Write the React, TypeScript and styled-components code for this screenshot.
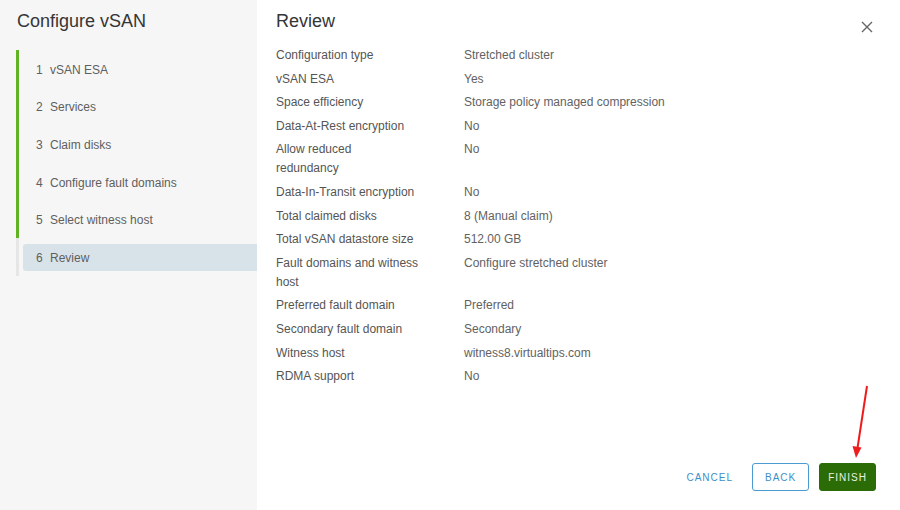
import styled, { createGlobalStyle } from 'styled-components';

const GlobalStyle = createGlobalStyle`
  html, body {
    margin: 0;
    padding: 0;
    background: #ffffff;
  }
  body {
    font-family: "Liberation Sans", Arial, sans-serif;
    color: #565656;
  }
  * {
    box-sizing: border-box;
  }
`;

const Shell = styled.div`
  position: relative;
  display: flex;
  width: 900px;
  height: 510px;
  overflow: hidden;
`;

const Sidebar = styled.aside`
  width: 257px;
  flex-shrink: 0;
  background: #f6f6f6;
  padding: 10px 0 0 16px;
`;

const SidebarTitle = styled.h2`
  margin: 0 0 17px 1px;
  font-size: 18px;
  line-height: 23px;
  font-weight: 400;
  color: #353535;
`;

const StepList = styled.ol`
  list-style: none;
  margin: 0;
  padding: 0;
`;

const Step = styled.li<{ $done?: boolean }>`
  height: 37.6px;
  padding: 6.5px 0 4.5px 4px;
  border-left: 3px solid ${({ $done }) => ($done ? '#62b323' : '#e6e6e6')};
`;

const StepInner = styled.div<{ $active?: boolean }>`
  display: flex;
  align-items: center;
  height: 100%;
  padding-left: 13px;
  border-radius: 3px 0 0 3px;
  background: ${({ $active }) => ($active ? '#d8e3e9' : 'transparent')};
  font-size: 12px;
  color: #5f5f5f;
`;

const StepNum = styled.span`
  width: 14px;
`;

const Main = styled.main`
  flex: 1;
  display: flex;
  flex-direction: column;
  padding: 10px 24px 19px 19px;
`;

const Header = styled.div`
  display: flex;
  justify-content: space-between;
  align-items: flex-start;
  margin-bottom: 9px;
`;

const Title = styled.h1`
  margin: 0;
  font-size: 18px;
  line-height: 23px;
  font-weight: 400;
  color: #353535;
`;

const CloseButton = styled.button`
  border: none;
  background: transparent;
  padding: 0;
  margin: 7px -1px 0 0;
  width: 20px;
  height: 20px;
  display: flex;
  align-items: center;
  justify-content: center;
  cursor: pointer;
`;

const Rows = styled.div`
  flex: 1;
  display: flex;
  flex-direction: column;
  gap: 4.6px;
`;

const Row = styled.div`
  display: grid;
  grid-template-columns: 188px 1fr;
  font-size: 12px;
  line-height: 19px;
`;

const Label = styled.div`
  max-width: 160px;
  white-space: pre-line;
  color: #555555;
`;

const Value = styled.div`
  color: #626262;
`;

const Footer = styled.div`
  display: flex;
  justify-content: flex-end;
  align-items: center;
  gap: 10px;
`;

const Button = styled.button<{ $variant: 'link' | 'outline' | 'solid' }>`
  height: 28px;
  padding: 0 ${({ $variant }) => ($variant === 'outline' ? '12px' : '8px')};
  border-radius: 3px;
  font-family: inherit;
  font-size: 10px;
  letter-spacing: 1px;
  cursor: pointer;
  border: 1px solid
    ${({ $variant }) =>
      $variant === 'outline' ? '#4a9bd1' : $variant === 'solid' ? '#2b6b0a' : 'transparent'};
  background: ${({ $variant }) => ($variant === 'solid' ? '#2b6c06' : 'transparent')};
  color: ${({ $variant }) => ($variant === 'solid' ? '#e9f1e2' : '#3d8fc9')};
`;

const Annotation = styled.svg`
  position: absolute;
  left: 846px;
  top: 380px;
  pointer-events: none;
`;

const steps = [
  'vSAN ESA',
  'Services',
  'Claim disks',
  'Configure fault domains',
  'Select witness host',
  'Review',
];

const review: [string, string][] = [
  ['Configuration type', 'Stretched cluster'],
  ['vSAN ESA', 'Yes'],
  ['Space efficiency', 'Storage policy managed compression'],
  ['Data-At-Rest encryption', 'No'],
  ['Allow reduced\nredundancy', 'No'],
  ['Data-In-Transit encryption', 'No'],
  ['Total claimed disks', '8 (Manual claim)'],
  ['Total vSAN datastore size', '512.00 GB'],
  ['Fault domains and witness\nhost', 'Configure stretched cluster'],
  ['Preferred fault domain', 'Preferred'],
  ['Secondary fault domain', 'Secondary'],
  ['Witness host', 'witness8.virtualtips.com'],
  ['RDMA support', 'No'],
];

export default function App() {
  const current = steps.length - 1;
  return (
    <>
      <GlobalStyle />
      <Shell>
        <Sidebar>
          <SidebarTitle>Configure vSAN</SidebarTitle>
          <StepList>
            {steps.map((s, i) => (
              <Step key={s} $done={i < current}>
                <StepInner $active={i === current}>
                  <StepNum>{i + 1}</StepNum>
                  {s}
                </StepInner>
              </Step>
            ))}
          </StepList>
        </Sidebar>

        <Main>
          <Header>
            <Title>Review</Title>
            <CloseButton aria-label="Close">
              <svg width="12" height="12" viewBox="0 0 12 12">
                <path d="M1 1L11 11M11 1L1 11" stroke="#666" strokeWidth="1.4" />
              </svg>
            </CloseButton>
          </Header>

          <Rows>
            {review.map(([k, v]) => (
              <Row key={k}>
                <Label>{k}</Label>
                <Value>{v}</Value>
              </Row>
            ))}
          </Rows>

          <Footer>
            <Button $variant="link">CANCEL</Button>
            <Button $variant="outline">BACK</Button>
            <Button $variant="solid">FINISH</Button>
          </Footer>
        </Main>

        <Annotation width="30" height="84" viewBox="0 0 30 84">
          <line x1="21" y1="6" x2="11.5" y2="68" stroke="#ee1c1c" strokeWidth="2" />
          <polygon points="10,78 6.5,66 15.5,67.5" fill="#ee1c1c" />
        </Annotation>
      </Shell>
    </>
  );
}
